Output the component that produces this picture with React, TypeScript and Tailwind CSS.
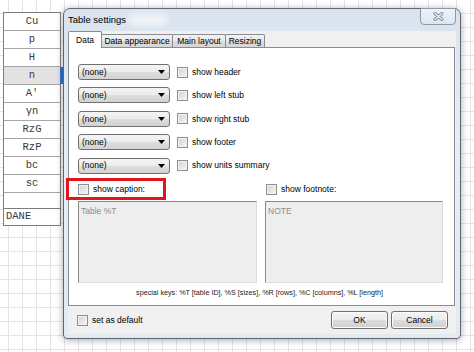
import React from 'react';

const SYMBOLS = ['Cu', 'p', 'H', 'n', "A'", 'γn', 'RzG', 'RzP', 'bc', 'sc'];

const OPTIONS = ['show header', 'show left stub', 'show right stub', 'show footer', 'show units summary'];

const TABS = [
  { label: 'Data appearance', w: 'w-[72px]' },
  { label: 'Main layout', w: 'w-[54px]' },
  { label: 'Resizing', w: 'w-[40px]' },
];

function Checkbox() {
  return (
    <span className="block w-[11px] h-[11px] shrink-0 border border-[#8e8f8f] bg-[linear-gradient(135deg,#d2d2d2,#f6f6f6)] shadow-[inset_0_0_0_1px_#f1f1f1]" />
  );
}

function Combo() {
  return (
    <div className="flex items-center w-[92px] h-[16px] shrink-0 rounded-[3px] border border-[#707070] bg-[linear-gradient(to_bottom,#f4f4f4_0%,#ececec_50%,#dedede_50%,#d2d2d2_100%)] pl-[3px] pr-[4px]">
      <span className="flex-1 text-[8.5px] leading-none text-black">(none)</span>
      <svg width="7" height="4" viewBox="0 0 7 4">
        <path d="M0 0h7L3.5 4z" fill="#000" />
      </svg>
    </div>
  );
}

function Button({ children }: { children: React.ReactNode }) {
  return (
    <div className="flex items-center justify-center w-[57px] h-[18px] rounded-[3px] border border-[#707070] bg-[linear-gradient(to_bottom,#f4f4f4_0%,#ebebeb_50%,#dddddd_50%,#cfcfcf_100%)] shadow-[inset_0_0_0_1px_#fbfbfb] text-[8.5px] text-black">
      {children}
    </div>
  );
}

function SymbolTable() {
  return (
    <div className="w-[58px] bg-white border-l border-r border-t border-[#7d7d7d] font-['Liberation_Mono','DejaVu_Sans_Mono',monospace] text-[10.5px] text-[#3a3a3a]">
      {SYMBOLS.map((s) => (
        <div
          key={s}
          className={`relative h-[18px] flex items-center justify-center border-b border-[#a6a6a6] ${s === 'n' ? 'bg-[#e2e2e2]' : ''}`}
        >
          {s}
          {s === 'n' && <span className="absolute -right-[4px] top-0 bottom-0 w-[4px] bg-[#2f74d0]" />}
        </div>
      ))}
      <div className="h-[16px] border-b border-[#7d7d7d]" />
      <div className="h-[17px] flex items-center pl-[2px] border-b border-[#7d7d7d]">DANE</div>
    </div>
  );
}

function TextBox({ text }: { text: string }) {
  return (
    <div className="h-[82px] bg-[#eeeeee] border-l border-t border-[#8a8a8a] border-r border-b border-r-[#dedede] border-b-[#dedede] px-[2px] pt-[3px] text-[8.5px] text-[#8c8c8c]">
      {text}
    </div>
  );
}

function Dialog() {
  return (
    <div className="absolute left-[63px] top-[8px] w-[398px] h-[331px] rounded-t-[7px] rounded-b-[4px] border border-[#5f6670] bg-[linear-gradient(to_bottom,#d9e3ee,#e6edf4_40%,#e3eaf1)] shadow-[0_1px_7px_rgba(0,0,0,0.35)] flex flex-col">
      {/* title bar */}
      <div className="relative h-[22px] shrink-0 flex items-center pl-[4px]">
        <span className="absolute left-[64px] top-[5px] w-[40px] h-[12px] rounded-full bg-white/60 blur-[3px]" />
        <span className="relative text-[9.5px] text-black">Table settings</span>
        <div className="absolute right-[4px] -top-px w-[36px] h-[17px] rounded-b-[4px] border border-[#8b98aa] bg-[linear-gradient(to_bottom,#eef3f8,#dde6ef)] flex items-center justify-center">
          <svg width="11" height="9" viewBox="0 0 11 9">
            <path d="M2 1.5L9 7.5M9 1.5L2 7.5" stroke="#7d8793" strokeWidth="3" strokeLinecap="round" />
            <path d="M2 1.5L9 7.5M9 1.5L2 7.5" stroke="#f4f6f8" strokeWidth="1.3" strokeLinecap="round" />
          </svg>
        </div>
      </div>

      {/* client area */}
      <div className="mx-[4px] w-[388px] h-[303px] bg-[#f0f0f0] flex flex-col">
        {/* tabs */}
        <div className="flex items-end h-[16px] shrink-0">
          <div className="relative z-10 w-[34px] h-[17px] -mb-px flex items-center justify-center bg-white border border-b-0 border-[#898c95] rounded-t-[2px] text-[8.5px] text-black">
            Data
          </div>
          {TABS.map((t) => (
            <div
              key={t.label}
              className={`${t.w} -ml-px h-[13px] flex items-center justify-center border border-b-0 border-[#898c95] rounded-t-[2px] bg-[linear-gradient(to_bottom,#f3f3f3,#e6e6e6_50%,#dcdcdc_50%,#d6d6d6)] text-[8.5px] text-black`}
            >
              {t.label}
            </div>
          ))}
        </div>

        {/* panel */}
        <div className="w-[387px] h-[259px] shrink-0 bg-white border border-[#898c95] pt-[16px] pl-[9px] pr-[11px] flex flex-col">
          <div className="flex flex-col gap-[7.4px]">
            {OPTIONS.map((o) => (
              <div key={o} className="flex items-center h-[16px]">
                <Combo />
                <span className="ml-[7px]">
                  <Checkbox />
                </span>
                <span className="ml-[4px] text-[8.5px] text-black leading-none">{o}</span>
              </div>
            ))}
          </div>

          <div className="mt-[10px] flex gap-[8px]">
            <div className="w-[179px]">
              <div className="flex items-center h-[12px]">
                <Checkbox />
                <span className="ml-[4px] text-[8.5px] text-black leading-none">show caption:</span>
              </div>
              <div className="mt-[5px]">
                <TextBox text="Table %T" />
              </div>
            </div>
            <div className="w-[178px]">
              <div className="flex items-center h-[12px] pl-[1px]">
                <Checkbox />
                <span className="ml-[4px] text-[8.5px] text-black leading-none">show footnote:</span>
              </div>
              <div className="mt-[5px]">
                <TextBox text="NOTE" />
              </div>
            </div>
          </div>

          <div className="mt-[5px] text-center text-[7.2px] leading-[10px] text-[#222] pr-[2px]">
            special keys: %T [table ID], %S [sizes], %R [rows], %C [columns], %L [length]
          </div>
        </div>

        {/* bottom bar */}
        <div className="h-[28px] shrink-0 flex items-center pl-[9px] pr-[8px]">
          <Checkbox />
          <span className="ml-[4px] text-[8.5px] text-black leading-none">set as default</span>
          <div className="ml-auto flex gap-[3px]">
            <Button>OK</Button>
            <Button>Cancel</Button>
          </div>
        </div>
      </div>
    </div>
  );
}

export default function App() {
  return (
    <div className="relative w-[474px] h-[352px] overflow-hidden bg-white bg-[linear-gradient(to_right,#e4e4e4_1px,transparent_1px),linear-gradient(to_bottom,#e4e4e4_1px,transparent_1px)] bg-[size:14px_14px] bg-[position:8px_13px] pt-[12px] pl-[3px] font-['Liberation_Sans',Arial,sans-serif]">
      <SymbolTable />
      <Dialog />
      {/* highlight annotation */}
      <div className="absolute left-[66px] top-[178px] w-[100px] h-[22px] border-[3px] border-[#e3141b]" />
    </div>
  );
}
